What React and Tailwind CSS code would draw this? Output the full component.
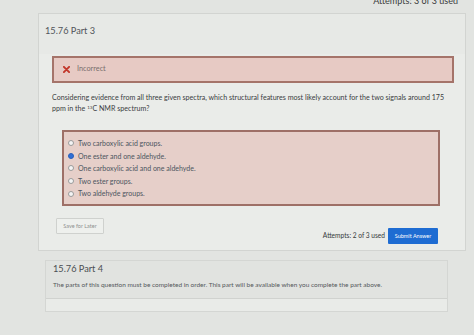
import React from "react";

const options = [
  { label: "Two carboxylic acid groups.", checked: false },
  { label: "One ester and one aldehyde.", checked: true },
  { label: "One carboxylic acid and one aldehyde.", checked: false },
  { label: "Two ester groups.", checked: false },
  { label: "Two aldehyde groups.", checked: false },
];

const Radio = ({ checked }) => (
  <span
    className={
      "w-[6px] h-[6px] rounded-full flex-shrink-0 border " +
      (checked ? "bg-[#2f6fd8] border-[#2a5fb8]" : "bg-[#f4f4f4] border-[#9a9a9a]")
    }
  />
);

export default function App() {
  return (
    <div
      className="w-[474px] h-[335px] overflow-hidden bg-[#e2e4e1] text-[#4d4f4e]"
      style={{ fontFamily: "Lato, 'Open Sans', sans-serif" }}
    >
      {/* cut-off attempts line at the very top */}
      <div className="h-[12px] flex justify-end pr-[16px] overflow-hidden">
        <span className="text-[9px] leading-none -mt-[4px] text-[#3a3c3d]">Attempts: 3 of 3 used</span>
      </div>

      {/* Part 3 card */}
      <div className="ml-[38px] w-[428px] mt-[1px] border border-[#d2d4d1] bg-[#eaece9]">
        <div className="h-[40px] px-[6px] pb-[6px] flex items-center bg-[#e7e9e6]">
          <span className="text-[9.2px] text-[#50545a]">15.76 Part 3</span>
        </div>

        <div className="pl-[13px] pr-[11px] pt-[2px] pb-[6px]">
          {/* Incorrect banner */}
          <div className="h-[27px] border-2 border-[#a5746a] bg-[#e7cac4] flex items-center pl-[9px] gap-[7px]">
            <svg width="7" height="7" viewBox="0 0 8 8">
              <path d="M1 1 L7 7 M7 1 L1 7" stroke="#c2362a" strokeWidth="2.2" strokeLinecap="round" />
            </svg>
            <span className="text-[7.3px] text-[#7a6f6d]">Incorrect</span>
          </div>

          {/* Question */}
          <p className="mt-[9px] text-[7.1px] leading-[11px] text-[#3a3d3f]">
            Considering evidence from all three given spectra, which structural features most likely account for the two signals around 175 ppm in the{" "}
            <span className="relative -top-[2px] text-[4.5px] leading-none">13</span>C NMR spectrum?
          </p>

          {/* Options */}
          <div className="ml-[10px] mt-[16px] w-[378px] h-[76px] border-2 border-[#9e7067] bg-[#e6cfc9] pl-[4px] pt-[5px] flex flex-col">
            {options.map((o) => (
              <label key={o.label} className="h-[12.6px] flex items-center gap-[4px] text-[7px] text-[#4c5560]">
                <Radio checked={o.checked} />
                <span>{o.label}</span>
              </label>
            ))}
          </div>

          {/* Footer row */}
          <div className="flex justify-between items-start mt-[12px] ml-[4px]">
            <button className="w-[48px] h-[16px] border border-[#cfd1ce] bg-[#eef0ed] text-[5.5px] text-[#8e9090] rounded-[1px]">
              Save for Later
            </button>
            <div className="flex items-center gap-[3px] mt-[10px] mr-[16px]">
              <span className="text-[6.6px] text-[#34383a]">Attempts: 2 of 3 used</span>
              <button className="w-[50px] h-[16px] bg-[#1e6cd2] text-white text-[5.5px] rounded-[1px]">
                Submit Answer
              </button>
            </div>
          </div>
        </div>
      </div>

      {/* Part 4 card */}
      <div className="ml-[45px] w-[403px] mt-[9px] border border-[#d4d6d3] bg-[#e9ebe8]">
        <div className="h-[38px] bg-[#e1e3e0] border-b border-[#d0d2cf] px-[7px] pt-[1px]">
          <div className="text-[9.2px] leading-[14px] text-[#4a4e52]">15.76 Part 4</div>
          <div className="mt-[5px] text-[6.5px] leading-[8px] text-[#55595c]">
            The parts of this question must be completed in order. This part will be available when you complete the part above.
          </div>
        </div>
        <div className="h-[12px]" />
      </div>
    </div>
  );
}
